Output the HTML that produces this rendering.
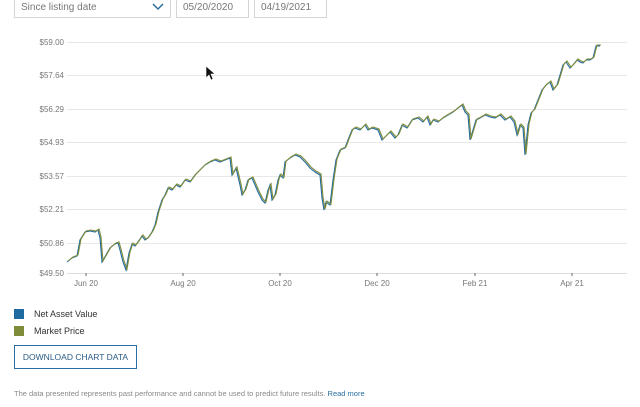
<!DOCTYPE html>
<html><head><style>
body{margin:0;width:640px;height:407px;background:#fff;font-family:"Liberation Sans",sans-serif;position:relative;overflow:hidden}
.box{position:absolute;top:-1px;height:19px;border:1px solid #d5d5d5;border-top:none;font-size:10px;color:#777;line-height:18px;padding-left:6px;box-sizing:border-box}
.leg{position:absolute;left:14px;width:10px;height:10px}
.legt{position:absolute;left:34px;font-size:9px;color:#333}
</style></head><body>
<div class="box" style="left:14px;width:157px">Since listing date
<svg style="position:absolute;right:6px;top:4px" width="12" height="8"><path d="M1 1 L6 6 L11 1" stroke="#2a6fa0" stroke-width="1.5" fill="none"/></svg></div>
<div class="box" style="left:176px;width:73px">05/20/2020</div>
<div class="box" style="left:254px;width:73px">04/19/2021</div>
<svg style="position:absolute;left:0;top:0" width="640" height="290">
<g stroke="#e8e8e8" stroke-width="1">
<line x1="67" y1="42.5" x2="627" y2="42.5"/><line x1="67" y1="75.5" x2="627" y2="75.5"/><line x1="67" y1="109.5" x2="627" y2="109.5"/><line x1="67" y1="142.5" x2="627" y2="142.5"/><line x1="67" y1="176.5" x2="627" y2="176.5"/><line x1="67" y1="209.5" x2="627" y2="209.5"/><line x1="67" y1="243.5" x2="627" y2="243.5"/>
</g>
<line x1="67" y1="273.5" x2="627" y2="273.5" stroke="#ddd"/>
<g stroke="#666"><line x1="86" y1="273" x2="86" y2="276"/><line x1="183" y1="273" x2="183" y2="276"/><line x1="280" y1="273" x2="280" y2="276"/><line x1="377" y1="273" x2="377" y2="276"/><line x1="475" y1="273" x2="475" y2="276"/><line x1="572" y1="273" x2="572" y2="276"/></g>
<g font-size="8" fill="#777" font-family="Liberation Sans" text-anchor="end">
<text x="64" y="45">$59.00</text><text x="64" y="78">$57.64</text><text x="64" y="112">$56.29</text><text x="64" y="145">$54.93</text><text x="64" y="179">$53.57</text><text x="64" y="212">$52.21</text><text x="64" y="246">$50.86</text><text x="64" y="276">$49.50</text>
</g>
<g font-size="8" fill="#777" font-family="Liberation Sans" text-anchor="middle">
<text x="86" y="286">Jun 20</text><text x="183" y="286">Aug 20</text><text x="280" y="286">Oct 20</text><text x="377" y="286">Dec 20</text><text x="475" y="286">Feb 21</text><text x="572" y="286">Apr 21</text>
</g>
<g fill="none" stroke-width="1.1">
<polyline stroke="#1f6aa0" points="67,262 72,258 77,256 80,240 85,232 90,231 95,232 98,230 100,238 102,262 106,255 110,248 115,244 118,243 120,250 123,262 126,270 129,253 132,244 135,246 138,242 142,236 145,240 148,238 152,232 155,225 158,212 162,200 165,195 168,188 172,190 176,185 180,187 185,180 190,182 195,175 200,170 205,165 210,162 215,160 220,162 225,160 230,158 232,175 236,168 240,185 242,195 245,190 248,180 252,178 255,185 258,192 262,200 265,203 268,190 270,185 272,200 275,195 278,180 280,175 283,178 285,162 290,158 295,155 300,157 305,162 310,168 315,172 320,175 322,198 324,210 326,202 330,205 333,180 336,160 340,150 345,148 348,140 352,130 355,128 360,130 365,125 368,130 372,128 378,130 382,140 385,137 390,132 395,138 398,135 402,125 407,128 412,120 418,118 423,122 427,117 430,125 433,120 438,122 443,118 448,115 453,112 458,108 462,105 465,112 468,115 470,140 473,130 476,120 480,118 485,115 490,117 495,118 500,115 505,120 510,117 514,122 517,135 520,125 523,128 525,155 528,125 531,113 534,110 538,100 542,90 546,85 550,82 553,90 557,85 560,75 563,65 566,62 570,68 573,65 577,60 580,62 583,63 586,60 590,60 593,58 596,46 600,46"/>
<polyline stroke="#7f8c3a" transform="translate(1,-1)" points="67,262 72,258 77,256 80,240 85,232 90,231 95,232 98,230 100,238 102,262 106,255 110,248 115,244 118,243 120,250 123,262 126,270 129,253 132,244 135,246 138,242 142,236 145,240 148,238 152,232 155,225 158,212 162,200 165,195 168,188 172,190 176,185 180,187 185,180 190,182 195,175 200,170 205,165 210,162 215,160 220,162 225,160 230,158 232,175 236,168 240,185 242,195 245,190 248,180 252,178 255,185 258,192 262,200 265,203 268,190 270,185 272,200 275,195 278,180 280,175 283,178 285,162 290,158 295,155 300,157 305,162 310,168 315,172 320,175 322,198 324,210 326,202 330,205 333,180 336,160 340,150 345,148 348,140 352,130 355,128 360,130 365,125 368,130 372,128 378,130 382,140 385,137 390,132 395,138 398,135 402,125 407,128 412,120 418,118 423,122 427,117 430,125 433,120 438,122 443,118 448,115 453,112 458,108 462,105 465,112 468,115 470,140 473,130 476,120 480,118 485,115 490,117 495,118 500,115 505,120 510,117 514,122 517,135 520,125 523,128 525,155 528,125 531,113 534,110 538,100 542,90 546,85 550,82 553,90 557,85 560,75 563,65 566,62 570,68 573,65 577,60 580,62 583,63 586,60 590,60 593,58 596,46 600,46"/>
</g>
<path d="M206 66 L206 78 L209 75 L211 80 L213 79 L211 74 L215 74 Z" fill="#111" stroke="#fff" stroke-width=".6"/>
</svg>
<div class="leg" style="top:309px;background:#1f6aa0"></div><div class="legt" style="top:309px">Net Asset Value</div>
<div class="leg" style="top:326px;background:#7f8c3a"></div><div class="legt" style="top:326px">Market Price</div>
<div style="position:absolute;left:14px;top:345px;width:121px;height:22px;border:1px solid #2a6fa0;font-size:8.5px;color:#2a5c85;line-height:22px;text-align:center">DOWNLOAD CHART DATA</div>
<div style="position:absolute;left:14px;top:389px;font-size:7.5px;color:#888">The data presented represents past performance and cannot be used to predict future results. <span style="color:#2a6fa0">Read more</span></div>
</body></html>
